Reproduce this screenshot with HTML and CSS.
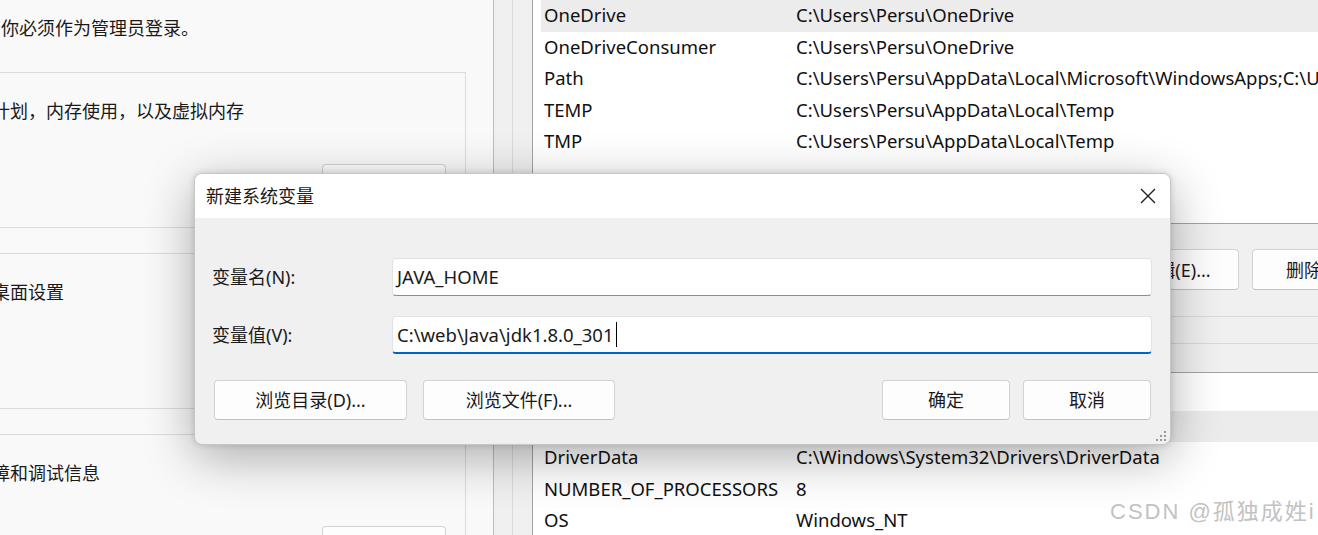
FILE: index.html
```html
<!DOCTYPE html>
<html lang="zh-CN">
<head>
<meta charset="utf-8">
<title>新建系统变量</title>
<link rel="stylesheet" href="styles.css">
</head>
<body>
<div class="desktop">
  <section class="win win-sys">
    <div class="sys-content">
      <p class="note">要进行大多数更改，你必须作为管理员登录。</p>
      <div class="group">
        <p class="group-text">视觉效果，处理器计划，内存使用，以及虚拟内存</p>
        <div class="group-actions"><button class="btn btn-sys">设置(S)...</button></div>
      </div>
      <div class="group">
        <p class="group-text">与登录帐户相关的桌面设置</p>
        <div class="group-actions"><button class="btn btn-sys">设置(E)...</button></div>
      </div>
      <div class="group">
        <p class="group-text">系统启动、系统故障和调试信息</p>
        <div class="group-actions"><button class="btn btn-sys">设置(T)...</button></div>
      </div>
    </div>
  </section>

  <section class="win win-env">
    <div class="env-group env-group-user">
      <div class="list list-user">
        <div class="list-head"></div>
        <div class="row row-selected"><span class="col-name">OneDrive</span><span class="col-value">C:\Users\Persu\OneDrive</span></div>
        <div class="row"><span class="col-name">OneDriveConsumer</span><span class="col-value">C:\Users\Persu\OneDrive</span></div>
        <div class="row"><span class="col-name">Path</span><span class="col-value">C:\Users\Persu\AppData\Local\Microsoft\WindowsApps;C:\Users\Persu\AppData\Local\Programs</span></div>
        <div class="row"><span class="col-name">TEMP</span><span class="col-value">C:\Users\Persu\AppData\Local\Temp</span></div>
        <div class="row"><span class="col-name">TMP</span><span class="col-value">C:\Users\Persu\AppData\Local\Temp</span></div>
      </div>
      <div class="env-actions">
        <button class="btn btn-env">新建(N)...</button>
        <button class="btn btn-env">编辑(E)...</button>
        <button class="btn btn-env">删除(D)</button>
      </div>
    </div>
    <div class="env-group env-group-sys">
      <div class="list list-sys">
        <div class="list-head list-head-sys"></div>
        <div class="row row-selected"><span class="col-name">ComSpec</span><span class="col-value">C:\Windows\system32\cmd.exe</span></div>
        <div class="row"><span class="col-name">DriverData</span><span class="col-value">C:\Windows\System32\Drivers\DriverData</span></div>
        <div class="row"><span class="col-name">NUMBER_OF_PROCESSORS</span><span class="col-value">8</span></div>
        <div class="row"><span class="col-name">OS</span><span class="col-value">Windows_NT</span></div>
        <div class="row"><span class="col-name">Path</span><span class="col-value">C:\Windows\system32;C:\Windows</span></div>
      </div>
    </div>
  </section>

  <div class="dialog" role="dialog" aria-label="新建系统变量">
    <header class="dialog-title">
      <span class="dialog-title-text">新建系统变量</span>
      <span class="dialog-close" aria-label="关闭">
        <svg width="16" height="16" viewBox="0 0 16 16"><path d="M1 1 L15 15 M15 1 L1 15" stroke="#1f1f1f" stroke-width="1.4" fill="none"/></svg>
      </span>
    </header>
    <div class="dialog-body">
      <div class="form">
        <span class="form-label">变量名(N):</span>
        <div class="field">JAVA_HOME</div>
        <span class="form-label">变量值(V):</span>
        <div class="field field-focus">C:\web\Java\jdk1.8.0_301<span class="caret"></span></div>
      </div>
      <div class="dialog-actions">
        <div class="actions-group actions-left">
          <button class="btn btn-dlg btn-browse-dir">浏览目录(D)...</button>
          <button class="btn btn-dlg btn-browse-file">浏览文件(F)...</button>
        </div>
        <div class="actions-group actions-right">
          <button class="btn btn-dlg btn-confirm">确定</button>
          <button class="btn btn-dlg btn-confirm">取消</button>
        </div>
      </div>
    </div>
    <span class="grip">
      <svg width="12" height="12" viewBox="0 0 12 12" fill="#9a9a9a">
        <rect x="9" y="1" width="2" height="2"/>
        <rect x="5" y="5" width="2" height="2"/><rect x="9" y="5" width="2" height="2"/>
        <rect x="1" y="9" width="2" height="2"/><rect x="5" y="9" width="2" height="2"/><rect x="9" y="9" width="2" height="2"/>
      </svg>
    </span>
  </div>

  <div class="watermark">CSDN @孤独成姓i</div>
</div>
</body>
</html>
```

FILE: styles.css
```css
* { box-sizing: border-box; }

html, body {
  margin: 0;
  padding: 0;
}

body {
  font-family: "Noto Sans", "Noto Sans CJK SC", sans-serif;
  font-size: 18px;
  color: #1a1a1a;
  background: #f0f0f0;
  overflow: hidden;
}

.desktop {
  position: relative;
  width: 1318px;
  height: 535px;
  overflow: hidden;
}

p { margin: 0; }

.btn {
  font: inherit;
  color: #1a1a1a;
  background: #fdfdfd;
  border: 1px solid #d3d3d3;
  border-bottom-color: #c2c2c2;
  border-radius: 4px;
  padding: 0;
  line-height: 1;
}

/* ---------- left window: system properties ---------- */
.win-sys {
  position: absolute;
  left: -200px;
  top: 0;
  width: 694px;
  height: 535px;
  background: #f9f9f9;
  border-right: 1px solid #bdbdbd;
  overflow: hidden;
}

.sys-content {
  padding: 18px 27px 0 36px;
}

.note {
  margin-left: 3px;
  height: 20px;
  line-height: 20px;
  white-space: nowrap;
}

.group {
  margin-top: 25px;
  height: 156px;
  border: 1px solid #dcdcdc;
  padding: 28px 19px 0 11px;
}

.note + .group { margin-top: 34px; }

.group-text {
  height: 20px;
  line-height: 20px;
  white-space: nowrap;
}

.group-actions {
  margin-top: 43px;
  display: flex;
  justify-content: flex-end;
}

.btn-sys {
  width: 124px;
  height: 41px;
}

/* ---------- right window: environment variables ---------- */
.win-env {
  position: absolute;
  left: 494px;
  top: 0;
  width: 920px;
  height: 535px;
  background: #f0f0f0;
  overflow: hidden;
  padding: 0 18px;
}

.env-group {
  border: 1px solid #d9d9d9;
  padding: 29px 15px 26px 19px;
}

.env-group-user { margin-top: -70px; }

.env-group-sys {
  margin-top: 26px;
  padding-top: 28px;
  padding-bottom: 0;
  border-bottom: none;
}

.list {
  background: #fff;
  border: 1px solid #a3a3a3;
  padding-left: 8px;
  overflow: hidden;
  color: #111;
  font-size: 18.5px;
}

.list-user { height: 264px; }
.list-sys { height: 240px; border-bottom: none; }

.list-head {
  height: 39px;
}

.list-head-sys { height: 37.5px; }

.row {
  height: 31.5px;
  line-height: 30.5px;
  display: flex;
  white-space: nowrap;
}

.row-selected { background: #ececec; }

.col-name {
  flex: 0 0 255px;
  padding-left: 3px;
  overflow: hidden;
}

.col-value {
  flex: 0 0 auto;
}

.env-actions {
  margin-top: 25px;
  display: flex;
  justify-content: flex-end;
  gap: 13px;
}

.btn-env {
  width: 128px;
  height: 41px;
}

/* ---------- dialog ---------- */
.dialog {
  position: absolute;
  left: 194px;
  top: 173px;
  width: 977px;
  height: 272px;
  background: #f0f0f0;
  border: 1px solid #c6c6c6;
  border-radius: 8px;
  box-shadow: 0 12px 50px rgba(0, 0, 0, 0.32), 0 0 6px rgba(0, 0, 0, 0.14);
  overflow: hidden;
  display: flex;
  flex-direction: column;
}

.dialog-title {
  height: 44px;
  flex: 0 0 44px;
  background: #fff;
  display: flex;
  align-items: center;
  justify-content: space-between;
  padding: 0 14px 0 11px;
}

.dialog-title-text {
  line-height: 22px;
  color: #1a1a1a;
}

.dialog-close {
  display: flex;
  width: 16px;
  height: 16px;
}

.dialog-body {
  padding: 40px 18px 0 17px;
}

.form {
  display: grid;
  grid-template-columns: 180px 1fr;
  row-gap: 20px;
  align-items: center;
}

.form-label {
  line-height: 22px;
  white-space: nowrap;
}

.field {
  height: 38px;
  background: #fff;
  border: 1px solid #e2e2e2;
  border-bottom-color: #8c8c8c;
  border-radius: 4px;
  padding: 0 4px 1px;
  display: flex;
  align-items: center;
  white-space: nowrap;
  color: #1a1a1a;
  font-size: 18.5px;
}

.field-focus {
  border-bottom: 2px solid #0067c0;
}

.caret {
  display: inline-block;
  width: 1px;
  height: 25px;
  margin-left: 2px;
  background: #000;
}

.dialog-actions {
  margin-top: 26px;
  display: flex;
  justify-content: space-between;
  padding: 0 1px 0 2px;
}

.actions-group { display: flex; }
.actions-left { gap: 16px; }
.actions-right { gap: 13px; }

.btn-dlg { height: 40px; }
.btn-browse-dir { width: 193px; }
.btn-browse-file { width: 192px; }
.btn-confirm { width: 128px; }

.grip {
  position: absolute;
  right: 3px;
  bottom: 2px;
  display: flex;
}

/* ---------- watermark ---------- */
.watermark {
  position: absolute;
  left: 1110px;
  top: 497px;
  font-family: "Liberation Sans", "Noto Sans CJK SC", sans-serif;
  font-size: 22px;
  letter-spacing: 2px;
  line-height: 30px;
  white-space: nowrap;
  color: #c2c2c2;
  text-shadow: 0 0 2px #fff;
}
```
